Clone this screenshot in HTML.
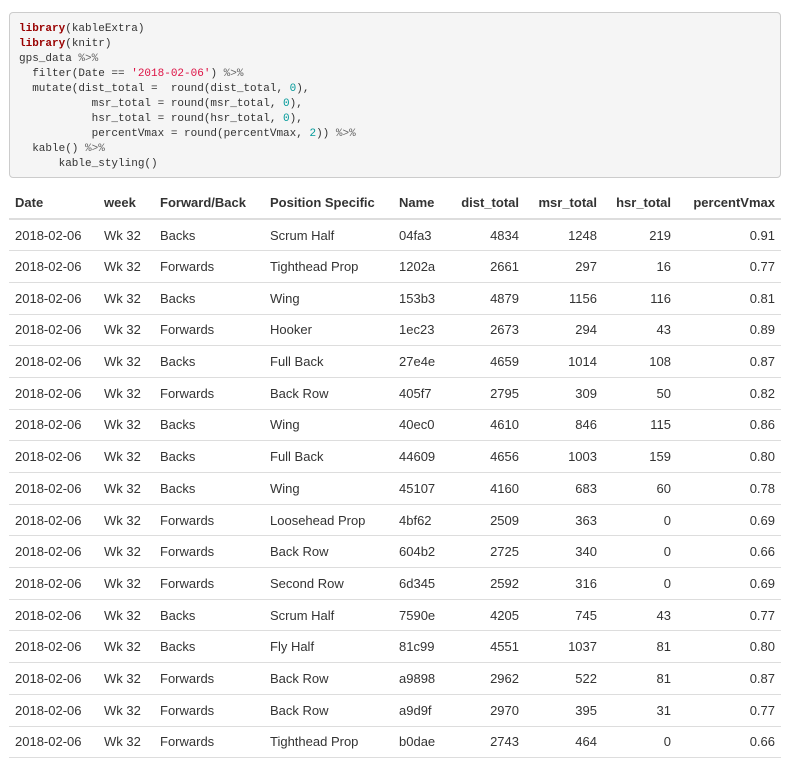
<!DOCTYPE html>
<html><head><meta charset="utf-8"><style>
body{margin:0;background:#fff;width:805px;height:756px;overflow:hidden;font-family:"Liberation Sans",Arial,sans-serif;color:#333}
pre{position:absolute;left:9px;top:12px;width:752px;height:146px;margin:0;padding:9px 9px;background:#f5f5f5;border:1px solid #ccc;border-radius:4px;font-family:"Liberation Mono",monospace;font-size:11px;line-height:15px;color:#333;white-space:pre}
.k{color:#990000;font-weight:bold}.s{color:#dd1144}.n{color:#009999}.o{color:#666}
table{position:absolute;left:9px;top:186px;width:772px;border-collapse:collapse;font-size:13px;table-layout:fixed}
th{font-weight:bold;text-align:left;height:33px;padding:0 6px;border-bottom:2px solid #ddd;box-sizing:border-box}
td{height:31.7px;padding:0 6px;border-bottom:1px solid #ddd;box-sizing:border-box}
.r{text-align:right}
</style></head><body>
<pre><span class="k">library</span>(kableExtra)
<span class="k">library</span>(knitr)
gps_data <span class="o">%&gt;%</span>
  filter(Date == <span class="s">'2018-02-06'</span>) <span class="o">%&gt;%</span>
  mutate(dist_total =  round(dist_total, <span class="n">0</span>),
           msr_total = round(msr_total, <span class="n">0</span>),
           hsr_total = round(hsr_total, <span class="n">0</span>),
           percentVmax = round(percentVmax, <span class="n">2</span>)) <span class="o">%&gt;%</span>
  kable() <span class="o">%&gt;%</span>
      kable_styling()</pre>
<table>
<colgroup><col style="width:89px"><col style="width:56px"><col style="width:110px"><col style="width:129px"><col style="width:60px"><col style="width:72px"><col style="width:78px"><col style="width:74px"><col style="width:104px"></colgroup>
<tr><th>Date</th><th>week</th><th>Forward/Back</th><th>Position Specific</th><th>Name</th><th class="r">dist_total</th><th class="r">msr_total</th><th class="r">hsr_total</th><th class="r">percentVmax</th></tr>
<tr><td>2018-02-06</td><td>Wk 32</td><td>Backs</td><td>Scrum Half</td><td>04fa3</td><td class="r">4834</td><td class="r">1248</td><td class="r">219</td><td class="r">0.91</td></tr>
<tr><td>2018-02-06</td><td>Wk 32</td><td>Forwards</td><td>Tighthead Prop</td><td>1202a</td><td class="r">2661</td><td class="r">297</td><td class="r">16</td><td class="r">0.77</td></tr>
<tr><td>2018-02-06</td><td>Wk 32</td><td>Backs</td><td>Wing</td><td>153b3</td><td class="r">4879</td><td class="r">1156</td><td class="r">116</td><td class="r">0.81</td></tr>
<tr><td>2018-02-06</td><td>Wk 32</td><td>Forwards</td><td>Hooker</td><td>1ec23</td><td class="r">2673</td><td class="r">294</td><td class="r">43</td><td class="r">0.89</td></tr>
<tr><td>2018-02-06</td><td>Wk 32</td><td>Backs</td><td>Full Back</td><td>27e4e</td><td class="r">4659</td><td class="r">1014</td><td class="r">108</td><td class="r">0.87</td></tr>
<tr><td>2018-02-06</td><td>Wk 32</td><td>Forwards</td><td>Back Row</td><td>405f7</td><td class="r">2795</td><td class="r">309</td><td class="r">50</td><td class="r">0.82</td></tr>
<tr><td>2018-02-06</td><td>Wk 32</td><td>Backs</td><td>Wing</td><td>40ec0</td><td class="r">4610</td><td class="r">846</td><td class="r">115</td><td class="r">0.86</td></tr>
<tr><td>2018-02-06</td><td>Wk 32</td><td>Backs</td><td>Full Back</td><td>44609</td><td class="r">4656</td><td class="r">1003</td><td class="r">159</td><td class="r">0.80</td></tr>
<tr><td>2018-02-06</td><td>Wk 32</td><td>Backs</td><td>Wing</td><td>45107</td><td class="r">4160</td><td class="r">683</td><td class="r">60</td><td class="r">0.78</td></tr>
<tr><td>2018-02-06</td><td>Wk 32</td><td>Forwards</td><td>Loosehead Prop</td><td>4bf62</td><td class="r">2509</td><td class="r">363</td><td class="r">0</td><td class="r">0.69</td></tr>
<tr><td>2018-02-06</td><td>Wk 32</td><td>Forwards</td><td>Back Row</td><td>604b2</td><td class="r">2725</td><td class="r">340</td><td class="r">0</td><td class="r">0.66</td></tr>
<tr><td>2018-02-06</td><td>Wk 32</td><td>Forwards</td><td>Second Row</td><td>6d345</td><td class="r">2592</td><td class="r">316</td><td class="r">0</td><td class="r">0.69</td></tr>
<tr><td>2018-02-06</td><td>Wk 32</td><td>Backs</td><td>Scrum Half</td><td>7590e</td><td class="r">4205</td><td class="r">745</td><td class="r">43</td><td class="r">0.77</td></tr>
<tr><td>2018-02-06</td><td>Wk 32</td><td>Backs</td><td>Fly Half</td><td>81c99</td><td class="r">4551</td><td class="r">1037</td><td class="r">81</td><td class="r">0.80</td></tr>
<tr><td>2018-02-06</td><td>Wk 32</td><td>Forwards</td><td>Back Row</td><td>a9898</td><td class="r">2962</td><td class="r">522</td><td class="r">81</td><td class="r">0.87</td></tr>
<tr><td>2018-02-06</td><td>Wk 32</td><td>Forwards</td><td>Back Row</td><td>a9d9f</td><td class="r">2970</td><td class="r">395</td><td class="r">31</td><td class="r">0.77</td></tr>
<tr><td>2018-02-06</td><td>Wk 32</td><td>Forwards</td><td>Tighthead Prop</td><td>b0dae</td><td class="r">2743</td><td class="r">464</td><td class="r">0</td><td class="r">0.66</td></tr>
</table>
</body></html>
